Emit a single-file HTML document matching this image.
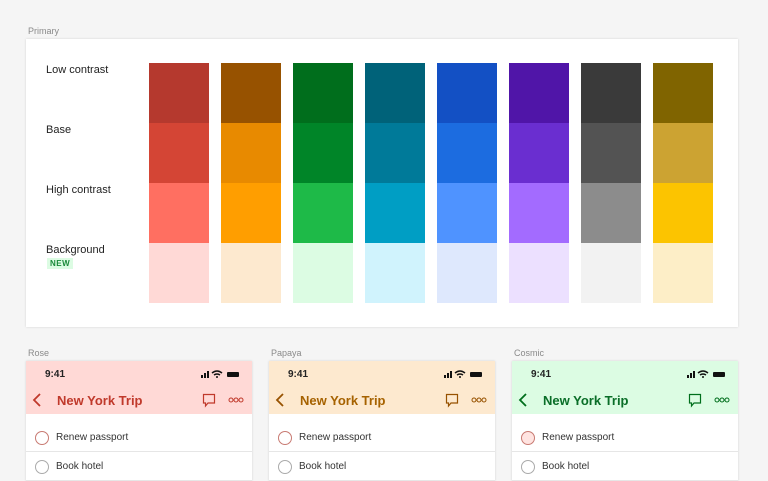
<!DOCTYPE html><html><head><style>
*{margin:0;padding:0;box-sizing:border-box}
body{width:768px;height:481px;overflow:hidden;background:#f5f5f5;font-family:"Liberation Sans",sans-serif;position:relative}
.a{position:absolute}
.lbl{font-size:9px;color:#8a8a8a}
.card{left:26px;top:39px;width:712px;height:288px;background:#fff;box-shadow:0 0 2px rgba(0,0,0,.15)}
.rl{font-size:11px;color:#222;left:46px}
.sw{width:60px;height:60px}
.ph{top:361px;width:226px;height:120px;background:#fff;box-shadow:0 0 2px rgba(0,0,0,.15);overflow:hidden}
.hd{position:absolute;left:0;top:0;width:100%;height:53px}
.t{position:absolute;left:19px;top:8px;font-size:10px;font-weight:bold;color:#222}
.ti{position:absolute;left:31px;top:32px;font-size:13px;font-weight:bold}
.row{position:absolute;left:0;width:100%;height:29px;border-bottom:1px solid #e6e6e6;font-size:10px;color:#333}
.row span{position:absolute;left:30px;top:9px}
.c{position:absolute;left:9px;top:8px;width:14px;height:14px;border-radius:50%;border:1px solid #aaa}
</style></head><body>
<div class="a lbl" style="left:28px;top:26px">Primary</div>
<div class="a card"></div>
<div class="a rl" style="top:64px">Low contrast</div>
<div class="a rl" style="top:124px">Base</div>
<div class="a rl" style="top:184px">High contrast</div>
<div class="a rl" style="top:244px">Background</div>
<div class="a" style="left:47px;top:258px;background:#dcfce3;color:#1a8a3a;font-size:8px;font-weight:bold;padding:1px 3px;letter-spacing:.5px">NEW</div>
<div id="g"></div>
<script>
var c=[["#b5392e","#d44535","#ff6f61","#ffd9d6"],["#975200","#e88a00","#ff9e00","#fde9cf"],["#006e1c","#008528","#1eba48","#dcfce3"],["#006279","#007a99","#009ec4","#d0f3fd"],["#1350c4","#1c6ce0","#4f93ff","#dee8fd"],["#5015a8","#6a2ed0","#a36bff","#ece0ff"],["#3a3a3a","#535353","#8c8c8c","#f2f2f2"],["#806400","#cca332","#fcc400","#fdeec7"]];
var h="";c.forEach(function(col,i){col.forEach(function(v,j){h+='<div class="a sw" style="left:'+(149+i*72)+'px;top:'+(63+j*60)+'px;background:'+v+'"></div>'})});
document.getElementById("g").innerHTML=h;
</script>
<div class="a lbl" style="left:28px;top:348px">Rose</div>
<div class="a lbl" style="left:271px;top:348px">Papaya</div>
<div class="a lbl" style="left:514px;top:348px">Cosmic</div>
<div class="a ph" style="left:26px">
<div class="hd" style="background:#ffd9d6"></div>
<div class="t">9:41</div>
<svg class="a" style="left:175px;top:9px" width="40" height="9"><rect x="0" y="5" width="2" height="3" fill="#111"/><rect x="3" y="3" width="2" height="5" fill="#111"/><rect x="6" y="1" width="2" height="7" fill="#111"/><path d="M11 3 Q16 -1 21 3 M13 5 Q16 3 19 5" stroke="#111" stroke-width="1.5" fill="none"/><circle cx="16" cy="7" r="1" fill="#111"/><rect x="26" y="2" width="12" height="5" rx="1" fill="#111"/></svg>
<svg class="a" style="left:5px;top:31px" width="12" height="16"><path d="M9 2 L3 8 L9 14" stroke="#c0392b" stroke-width="1.8" fill="none"/></svg>
<div class="ti" style="color:#c0392b">New York Trip</div>
<svg class="a" style="left:176px;top:32px" width="14" height="15"><path d="M1.5 1.5 H12.5 V10 H6 L3.5 13 V10 H1.5 Z" stroke="#c0392b" stroke-width="1.2" fill="none"/></svg>
<svg class="a" style="left:202px;top:36px" width="16" height="6"><circle cx="3" cy="3" r="2" stroke="#c0392b" fill="none"/><circle cx="8" cy="3" r="2" stroke="#c0392b" fill="none"/><circle cx="13" cy="3" r="2" stroke="#c0392b" fill="none"/></svg>
<div class="row" style="top:62px"><div class="c" style="border-color:#c87a72;background:#fff"></div><span>Renew passport</span></div>
<div class="row" style="top:91px"><div class="c"></div><span>Book hotel</span></div>
</div>
<div class="a ph" style="left:269px">
<div class="hd" style="background:#fde9cf"></div>
<div class="t">9:41</div>
<svg class="a" style="left:175px;top:9px" width="40" height="9"><rect x="0" y="5" width="2" height="3" fill="#111"/><rect x="3" y="3" width="2" height="5" fill="#111"/><rect x="6" y="1" width="2" height="7" fill="#111"/><path d="M11 3 Q16 -1 21 3 M13 5 Q16 3 19 5" stroke="#111" stroke-width="1.5" fill="none"/><circle cx="16" cy="7" r="1" fill="#111"/><rect x="26" y="2" width="12" height="5" rx="1" fill="#111"/></svg>
<svg class="a" style="left:5px;top:31px" width="12" height="16"><path d="M9 2 L3 8 L9 14" stroke="#975200" stroke-width="1.8" fill="none"/></svg>
<div class="ti" style="color:#a66200">New York Trip</div>
<svg class="a" style="left:176px;top:32px" width="14" height="15"><path d="M1.5 1.5 H12.5 V10 H6 L3.5 13 V10 H1.5 Z" stroke="#975200" stroke-width="1.2" fill="none"/></svg>
<svg class="a" style="left:202px;top:36px" width="16" height="6"><circle cx="3" cy="3" r="2" stroke="#975200" fill="none"/><circle cx="8" cy="3" r="2" stroke="#975200" fill="none"/><circle cx="13" cy="3" r="2" stroke="#975200" fill="none"/></svg>
<div class="row" style="top:62px"><div class="c" style="border-color:#c87a72"></div><span>Renew passport</span></div>
<div class="row" style="top:91px"><div class="c"></div><span>Book hotel</span></div>
</div>
<div class="a ph" style="left:512px">
<div class="hd" style="background:#dcfce3"></div>
<div class="t">9:41</div>
<svg class="a" style="left:175px;top:9px" width="40" height="9"><rect x="0" y="5" width="2" height="3" fill="#111"/><rect x="3" y="3" width="2" height="5" fill="#111"/><rect x="6" y="1" width="2" height="7" fill="#111"/><path d="M11 3 Q16 -1 21 3 M13 5 Q16 3 19 5" stroke="#111" stroke-width="1.5" fill="none"/><circle cx="16" cy="7" r="1" fill="#111"/><rect x="26" y="2" width="12" height="5" rx="1" fill="#111"/></svg>
<svg class="a" style="left:5px;top:31px" width="12" height="16"><path d="M9 2 L3 8 L9 14" stroke="#006e1c" stroke-width="1.8" fill="none"/></svg>
<div class="ti" style="color:#0a6e28">New York Trip</div>
<svg class="a" style="left:176px;top:32px" width="14" height="15"><path d="M1.5 1.5 H12.5 V10 H6 L3.5 13 V10 H1.5 Z" stroke="#006e1c" stroke-width="1.2" fill="none"/></svg>
<svg class="a" style="left:202px;top:36px" width="16" height="6"><circle cx="3" cy="3" r="2" stroke="#006e1c" fill="none"/><circle cx="8" cy="3" r="2" stroke="#006e1c" fill="none"/><circle cx="13" cy="3" r="2" stroke="#006e1c" fill="none"/></svg>
<div class="row" style="top:62px"><div class="c" style="border-color:#c87a72;background:#ffe4e1"></div><span>Renew passport</span></div>
<div class="row" style="top:91px"><div class="c"></div><span>Book hotel</span></div>
</div>
</body></html>
